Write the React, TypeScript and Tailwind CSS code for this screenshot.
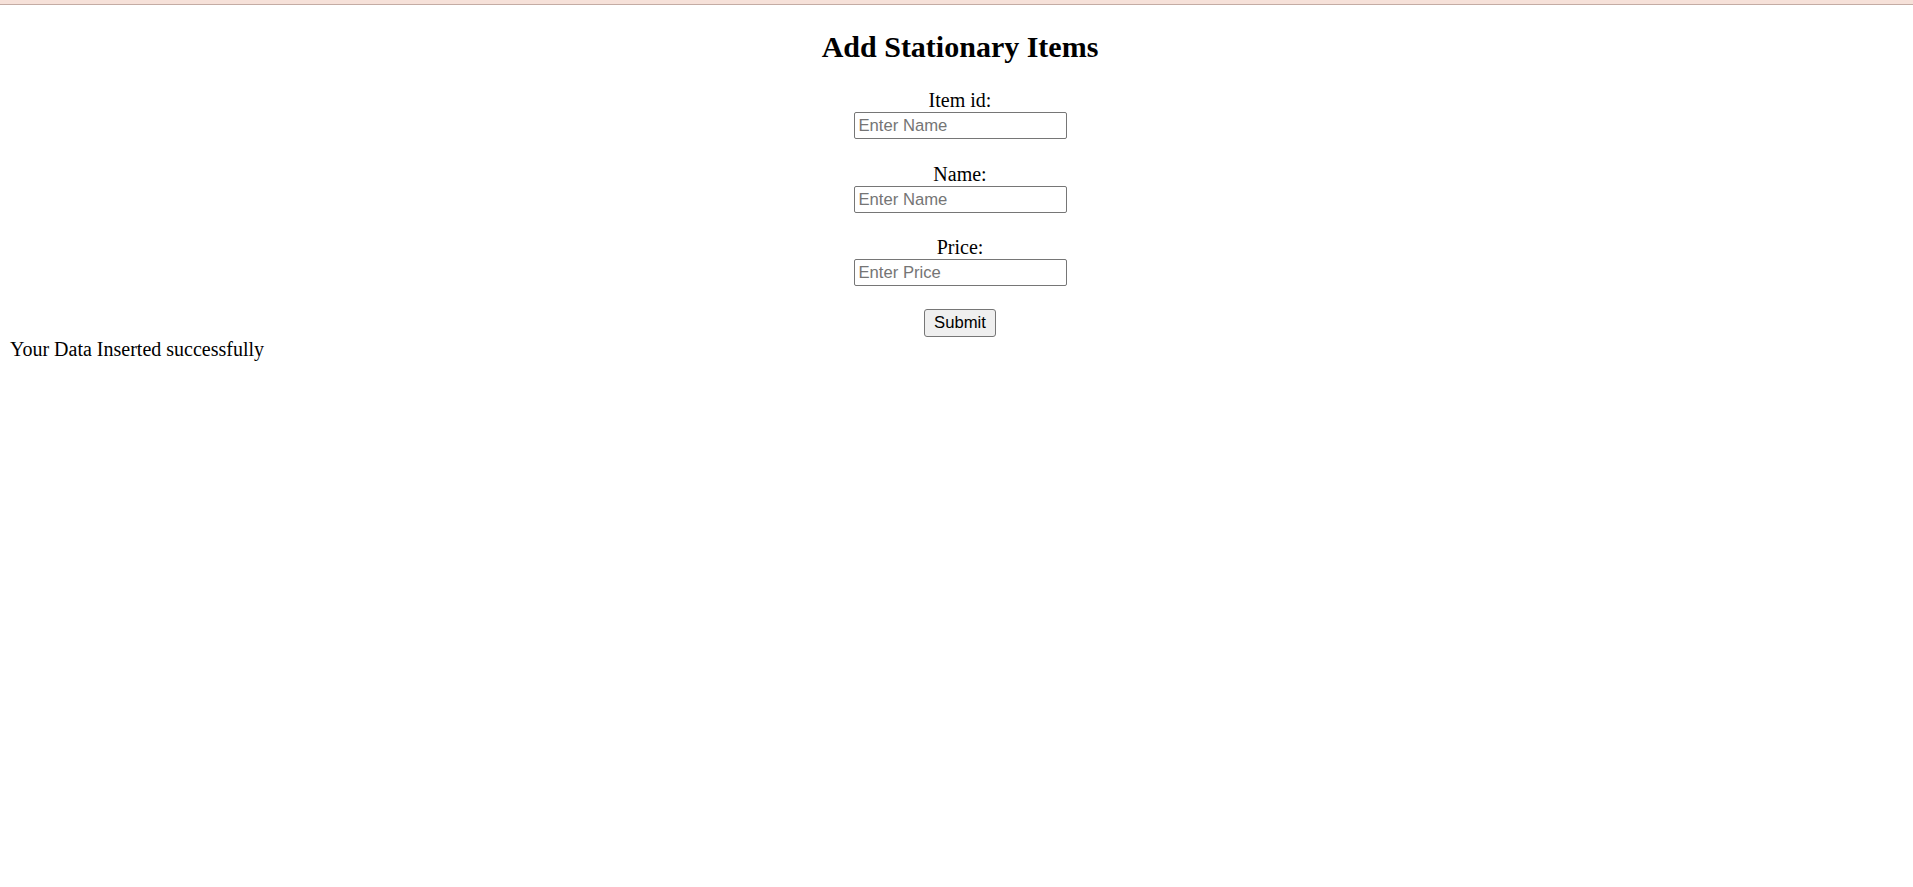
export default function App() {
    return (
        <div className="min-h-screen bg-white text-black" style={{ fontFamily: '"Liberation Serif", "Times New Roman", serif' }}>
            <div className="h-[5px] bg-[#f6e1d9] border-b border-[#c4aca4]"></div>
            <div className="px-[10px]">
                <div className="flex flex-col items-center pl-[7px]">
                    <h2 className="mt-[25px] text-[30px] leading-[34px] font-bold">Add Stationary Items</h2>
                    <form className="flex flex-col items-center mt-[25px]" onSubmit={(e) => e.preventDefault()}>
                        <label className="text-[20px] leading-[23px]">Item id:</label>
                        <input placeholder="Enter Name" className="w-[213px] h-[27px] border border-[#767676] rounded-[2px] px-[4px] text-[16.67px] placeholder:text-[#757575] focus:outline-none" style={{ fontFamily: '"Liberation Sans", Arial, sans-serif' }} />
                        <label className="mt-[24px] text-[20px] leading-[23px]">Name:</label>
                        <input placeholder="Enter Name" className="w-[213px] h-[27px] border border-[#767676] rounded-[2px] px-[4px] text-[16.67px] placeholder:text-[#757575] focus:outline-none" style={{ fontFamily: '"Liberation Sans", Arial, sans-serif' }} />
                        <label className="mt-[23px] text-[20px] leading-[23px]">Price:</label>
                        <input placeholder="Enter Price" className="w-[213px] h-[27px] border border-[#767676] rounded-[2px] px-[4px] text-[16.67px] placeholder:text-[#757575] focus:outline-none" style={{ fontFamily: '"Liberation Sans", Arial, sans-serif' }} />
                        <button type="submit" className="mt-[23px] w-[72px] h-[28px] bg-[#efefef] border border-[#767676] rounded-[3px] text-[16.67px] leading-none" style={{ fontFamily: '"Liberation Sans", Arial, sans-serif' }}>Submit</button>
                    </form>
                </div>
                <p className="mt-[1px] text-[20px] leading-[23px]">Your Data Inserted successfully</p>
            </div>
        </div>
    );
}
